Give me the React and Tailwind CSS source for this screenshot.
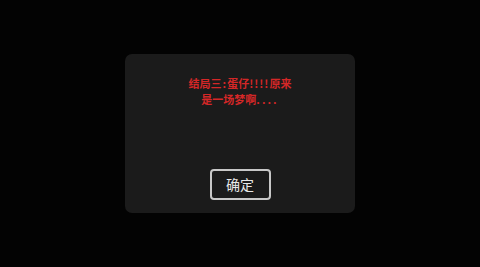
import React from "react";

export default function App() {
  return (
    <div
      className="w-[480px] h-[267px] bg-[#030303] flex items-center justify-center"
      style={{ fontFamily: '"Noto Sans CJK SC", "Noto Sans", sans-serif' }}
    >
      <div className="w-[230px] h-[159px] bg-[#1b1b1b] rounded-[7px] flex flex-col items-center justify-between pt-[21px] pb-[13px]">
        <p className="text-[11px] leading-[16px] font-bold text-[#d42727] text-center">
          结局三<span className="px-[1px]">:</span>蛋仔
          <span className="tracking-[1px]">!!!!</span>原来
          <br />
          是一场梦啊<span className="tracking-[2px]">....</span>
        </p>
        <button className="w-[61px] h-[31px] border-2 border-[#c8c8c8] rounded-[4px] text-[14px] text-[#e8e8e8] flex items-center justify-center">
          确定
        </button>
      </div>
    </div>
  );
}
